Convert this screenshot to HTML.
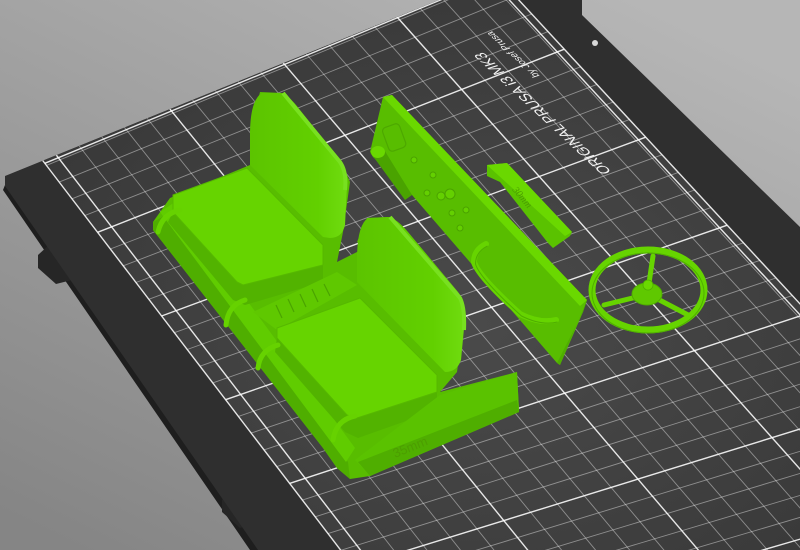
<!DOCTYPE html>
<html><head><meta charset="utf-8"><style>
html,body{margin:0;padding:0;width:800px;height:550px;overflow:hidden;}
svg{display:block;position:absolute;left:0;top:0}
</style></head><body>
<svg id="s" width="800" height="550" viewBox="0 0 800 550" xmlns="http://www.w3.org/2000/svg">
<defs>
<linearGradient id="bg" x1="0.8" y1="0" x2="0.1" y2="1">
<stop offset="0" stop-color="#b6b6b6"/><stop offset="1" stop-color="#858585"/></linearGradient>
<radialGradient id="surf" cx="0.45" cy="0.5" r="0.6">
<stop offset="0" stop-color="#4a4a4a"/><stop offset="1" stop-color="#353535"/></radialGradient>
<linearGradient id="back" x1="0" y1="0" x2="1" y2="0">
<stop offset="0" stop-color="#5cc400"/><stop offset="0.7" stop-color="#62d000"/><stop offset="1" stop-color="#70dc10"/></linearGradient>
</defs>
<rect width="800" height="550" fill="url(#bg)"/>
<polygon points="5,185 262,550 250,550 3,190" fill="#1e1e1e"/>
<polygon points="38,255 50,244 70,250 80,278 56,284 38,268" fill="#262626"/>
<polygon points="222,500 234,489 254,495 262,522 240,528 222,512" fill="#262626"/>
<polygon points="5,176 439,0 582,0 582,15 800,227 800,550 258,550 5,186" fill="#2f2f2f"/>
<circle cx="595" cy="43" r="3" fill="#d8d8d8"/>
<clipPath id="pc"><polygon points="5,176 439,0 582,0 582,15 800,227 800,550 258,550 5,186"/></clipPath>
<g clip-path="url(#pc)">
<polygon points="40,157 491,-30 1000,520 440,680" fill="url(#surf)"/>
<g id="grid"></g>
</g>
<text transform="matrix(-0.73,-0.68,0.95,-0.3,612,172)" font-family="Liberation Sans, sans-serif" font-size="15" fill="#f2f2f2">ORIGINAL PRUSA i3 MK3</text>
<text transform="matrix(-0.73,-0.68,0.95,-0.3,540,76)" font-family="Liberation Sans, sans-serif" font-size="10" fill="#f2f2f2">by Josef Prusa</text>

<!-- SEATS -->
<polygon points="153,222 170,198 250,165 250,132 260,92 283,93 343,165 350,182 343,232 337,262 367,247 357,242 367,218 390,217 460,298 465,315 457,372 440,392 517,372 519,410 370,476 350,479 337,468 323,448 153,230" fill="#58bd00"/>
<polygon points="153,222 168,214 348,462 350,479 337,468 323,448 153,230" fill="#4fae00"/>
<polygon points="160,212 175,202 355,448 346,462" fill="#60cc00"/>
<polygon points="173,212 237,282 243,285 323,265 323,282 245,305 233,300 168,222" fill="#52b300"/>
<polygon points="173,195 247,168 323,245 323,265 243,285 237,282 173,212" fill="#66d400" stroke="#56b800" stroke-width="1"/>
<path d="M250,135 Q250,100 262,93 L280,93 Q288,94 300,110 L340,160 Q348,170 347,185 L345,225 Q342,238 330,238 L323,237 L250,165 Z" fill="url(#back)"/>
<path d="M283,93 L340,162 Q347,172 345,190" stroke="#78e020" stroke-width="4" fill="none"/>
<polygon points="253,312 337,272 357,285 277,330" fill="#5fc800"/>
<g stroke="#4aa400" stroke-width="1.2">
<line x1="276" y1="305" x2="282" y2="318"/><line x1="288" y1="299" x2="294" y2="312"/><line x1="300" y1="294" x2="306" y2="307"/><line x1="312" y1="289" x2="318" y2="302"/><line x1="324" y1="284" x2="330" y2="296"/></g>
<polygon points="277,338 347,415 357,418 437,392 437,410 358,438 345,432 275,352" fill="#52b300"/>
<polygon points="277,328 360,298 437,375 437,392 357,418 347,415 277,338" fill="#66d400" stroke="#56b800" stroke-width="1"/>
<path d="M357,260 Q357,225 368,218 L388,217 Q396,218 408,232 L458,292 Q466,302 465,318 L461,360 Q457,372 445,372 L357,282 Z" fill="url(#back)"/>
<path d="M390,217 L460,298 Q465,308 464,330" stroke="#78e020" stroke-width="4" fill="none"/>
<polygon points="440,395 517,372 519,412 370,476 355,460" fill="#5ac200"/>
<polygon points="358,462 517,400 519,412 370,476" fill="#4fae00"/>
<text transform="translate(395,458) rotate(-22)" font-family="Liberation Sans, sans-serif" font-size="13" fill="#4c9e00">35mm</text>
<g fill="none" stroke="#66d200" stroke-width="5" stroke-linecap="round">
<path d="M158,232 Q162,214 180,210"/>
<path d="M226,325 Q228,305 245,300"/>
<path d="M258,368 Q260,350 278,345"/>
<path d="M333,440 Q336,420 355,416"/>
</g>

<!-- DASHBOARD -->
<polygon points="383,97 392,95 587,300 583,312 560,365 557,363 412,195 373,157 370,152" fill="#58bd00"/>
<polygon points="370,152 383,148 412,195 405,200" fill="#4aa300"/>
<polygon points="383,97 392,95 587,300 580,306" fill="#6ad800"/>
<polygon points="583,312 587,300 560,365 557,363" fill="#4fae00"/>
<ellipse cx="378" cy="152" rx="7" ry="6" fill="#6ad800"/>
<rect x="385" y="125" width="18" height="25" rx="4" fill="none" stroke="#4da800" stroke-width="1.2" transform="rotate(-20 394 137)"/>
<g fill="#64d000" stroke="#4aa200" stroke-width="1">
<circle cx="427" cy="193" r="3"/><circle cx="441" cy="196" r="4"/><circle cx="450" cy="194" r="5"/>
<circle cx="452" cy="213" r="3"/><circle cx="466" cy="210" r="3"/><circle cx="460" cy="228" r="3"/>
<circle cx="433" cy="175" r="3"/><circle cx="414" cy="160" r="3"/>
</g>
<polygon points="487,165 507,163 572,232 570,236 553,248 548,243 500,182 487,176" fill="#5ac200"/>
<polygon points="487,165 507,163 572,232 565,236" fill="#6ad800"/>
<text transform="translate(512,190) rotate(50)" font-family="Liberation Serif, serif" font-style="italic" font-size="10" fill="#4a9c00">30mm</text>
<path d="M486,244 Q474,250 474,262 Q478,276 520,314 Q540,324 556,320" fill="none" stroke="#66d400" stroke-width="6" stroke-linecap="round"/>
<path d="M486,244 Q474,250 474,262 Q478,276 520,314 Q540,324 556,320" fill="none" stroke="#4fae00" stroke-width="1" transform="translate(1.5,2)"/>

<!-- STEERING WHEEL -->
<g fill="none" stroke="#66d400" stroke-linecap="round">
<line x1="648" y1="290" x2="653" y2="256" stroke-width="5"/>
<line x1="645" y1="295" x2="604" y2="305" stroke-width="5"/>
<line x1="650" y1="295" x2="690" y2="316" stroke-width="5"/>
<ellipse cx="648" cy="290" rx="56" ry="40" stroke-width="7"/>
<ellipse cx="648" cy="290" rx="56" ry="40" stroke="#4fae00" stroke-width="1" transform="translate(0,3)"/>
</g>
<ellipse cx="647" cy="294" rx="15" ry="11" fill="#5fc800" stroke="#4fae00" stroke-width="1"/>
<circle cx="648" cy="285" r="5" fill="#6ad800" stroke="#4fae00" stroke-width="0.8"/>
</svg>
<script>
(function(){
var TL=[40,157],TR=[491,-30],BL=[440,680],BR=[1000,520];
function P(u,v){return [TL[0]+u*(TR[0]-TL[0])+v*(BL[0]-TL[0])+u*v*(BR[0]-TR[0]-BL[0]+TL[0]),
TL[1]+u*(TR[1]-TL[1])+v*(BL[1]-TL[1])+u*v*(BR[1]-TR[1]-BL[1]+TL[1])];}
var g=document.getElementById('grid'),h='';
function L(a,b,maj){h+='<line x1="'+a[0].toFixed(1)+'" y1="'+a[1].toFixed(1)+'" x2="'+b[0].toFixed(1)+'" y2="'+b[1].toFixed(1)+'" stroke="'+(maj?'rgba(255,255,255,0.88)':'rgba(255,255,255,0.42)')+'" stroke-width="'+(maj?1.4:0.9)+'"/>';}
var k,u,v;
for(k=0;k<20;k++){u=0.03+0.05*k;L(P(u,0),P(u,1),k%5==0);}
L(P(0,0),P(0,1),1);L(P(0.985,0),P(0.985,1),1);L(P(1,0),P(1,1),1);
for(k=0;k<32;k++){v=-0.016+0.032*k;if(v<0||v>1)continue;L(P(0,v),P(1,v),k%5==0);}
L(P(0,0),P(1,0),1);L(P(0,0.012),P(1,0.012),1);
g.innerHTML=h;
})();
</script>
</body></html>
